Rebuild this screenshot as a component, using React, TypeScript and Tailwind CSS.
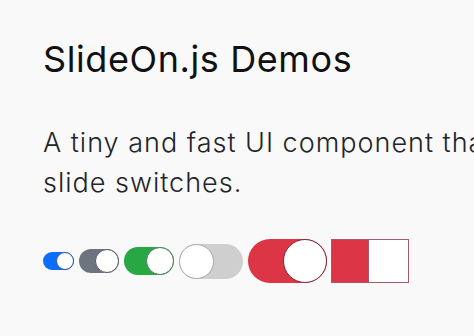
import React from "react";

function Pill({
  w,
  h,
  track,
  knobBorder,
  on = true,
}: {
  w: number;
  h: number;
  track: string;
  knobBorder: string;
  on?: boolean;
}) {
  return (
    <div
      className={`flex shrink-0 items-center rounded-full ${track} ${on ? "justify-end" : "justify-start"}`}
      style={{ width: w, height: h }}
    >
      <div
        className={`rounded-full border bg-white ${knobBorder}`}
        style={{ width: h, height: h }}
      />
    </div>
  );
}

export default function App() {
  return (
    <div
      className="h-[336px] w-[474px] overflow-hidden bg-[#f9f9f9] text-[#111]"
      style={{ fontFamily: "Inter, 'Noto Sans', sans-serif" }}
    >
      <div className="w-[960px] pl-[43px] pt-[38px]">
        <h1 className="text-[36px] leading-[1.2] font-normal tracking-[0.6px]">SlideOn.js Demos</h1>
        <p className="mt-[42px] text-[27px] leading-[40px] font-light tracking-[1px] text-[#212529]">
          A tiny and fast UI component that turns checkboxes into
          <br />
          slide switches.
        </p>
        <div className="mt-[36px] flex items-center gap-[5px]">
          <Pill w={31} h={18} track="bg-[#0d6efd]" knobBorder="border-[#2a5aa8]" />
          <Pill w={40} h={24} track="bg-[#6c757d]" knobBorder="border-[#555b61]" />
          <Pill w={50} h={28} track="bg-[#28a745]" knobBorder="border-[#4f7a58]" />
          <Pill w={64} h={35} track="bg-[#cfcfcf]" knobBorder="border-[#a8a8a8]" on={false} />
          <Pill w={79} h={44} track="bg-[#dc3545]" knobBorder="border-[#7e2a38]" />
          <div className="ml-[-1px] flex h-[44px] w-[78px] shrink-0 border border-[#a85868] bg-[#dc3545]">
            <div className="w-[36px]" />
            <div className="flex-1 border-l border-[#a85868] bg-white" />
          </div>
        </div>
      </div>
    </div>
  );
}
